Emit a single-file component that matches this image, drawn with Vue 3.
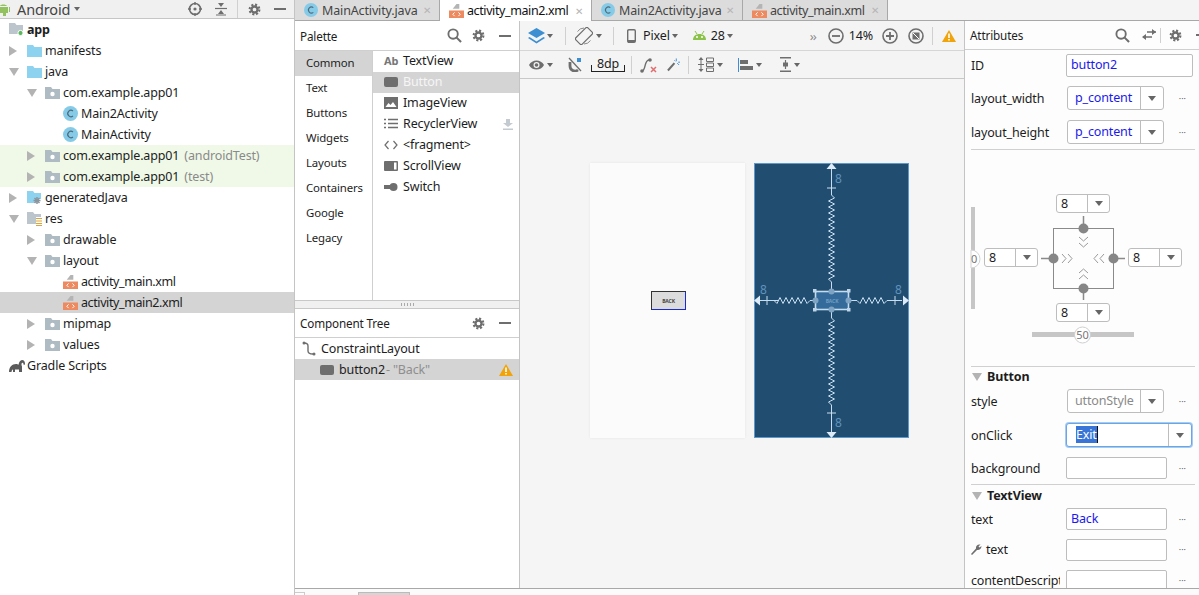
<template>
  <div class="ide">
    <!-- hidden icon sprite -->
    <svg class="sprite" width="0" height="0">
      <defs>
        <symbol id="gear" viewBox="0 0 16 16">
          <circle cx="8" cy="8" r="3.7" fill="none" stroke="currentColor" stroke-width="2.8" />
          <circle cx="8" cy="8" r="6" fill="none" stroke="currentColor" stroke-width="2.6" stroke-dasharray="2.5 2.21" />
        </symbol>
        <symbol id="search" viewBox="0 0 16 16">
          <circle cx="6.5" cy="6.5" r="5" fill="none" stroke="currentColor" stroke-width="2" />
          <path d="M10 10l5 5" stroke="currentColor" stroke-width="2.2" />
        </symbol>
        <symbol id="folder" viewBox="0 0 15 12">
          <path d="M0 0h6l1.5 2H15v10H0z" fill="currentColor" />
        </symbol>
        <symbol id="pkg" viewBox="0 0 15 12">
          <path d="M0 0h6l1.5 2H15v10H0z" fill="#afbbc3" />
          <circle cx="7.5" cy="7" r="2.2" fill="#fff" />
        </symbol>
        <symbol id="xml" viewBox="0 0 16 16">
          <path d="M4 6l4-5h3v5z" fill="#b4b4b4" />
          <rect y="8" width="16" height="8" fill="#ee8a5f" />
          <path d="M6 10l-2 2 2 2M10 10l2 2-2 2" fill="none" stroke="#fff" stroke-width="1" />
        </symbol>
        <symbol id="warn" viewBox="0 0 14 12">
          <path d="M7 0l7 12H0z" fill="#f0a30a" />
          <path d="M6.2 3.5h1.6v4.6H6.2zM6.2 9h1.6v1.6H6.2z" fill="#fff" />
        </symbol>
        <symbol id="clazz" viewBox="0 0 15 15">
          <circle cx="7.5" cy="7.5" r="7.5" fill="#85cbe8" />
          <path d="M10 5a3.2 3.2 0 1 0 0 5" fill="none" stroke="#4e6b7c" stroke-width="1.2" />
        </symbol>
      </defs>
    </svg>

    <aside class="project">
      <div class="project-head">
        <svg class="droid" width="10" height="13" viewBox="0 0 10 13"><path d="M-2 4h10v6H6v3H3v-3H-2zM9 4h1v5H9zM0 3c.5-2 6-2 7 0z" fill="#93c15f" /></svg>
        <span class="project-title">Android</span>
        <span class="caret big"></span>
        <svg class="ph-target" width="14" height="14" viewBox="0 0 14 14"><circle cx="7" cy="7" r="5.5" fill="none" stroke="#6e6e6e" stroke-width="1.6" /><circle cx="7" cy="7" r="1.6" fill="#6e6e6e" /><path d="M7 0v3M7 11v3M0 7h3M11 7h3" stroke="#6e6e6e" stroke-width="1.4" /></svg>
        <svg class="ph-collapse" width="12" height="14" viewBox="0 0 12 14"><path d="M0 6.5h12" stroke="#6e6e6e" stroke-width="1.2" /><path d="M6 5L3 1h6zM6 8l3 4H3z" fill="#6e6e6e" /><path d="M1 13h10" stroke="#6e6e6e" /></svg>
        <i class="vsep ph-sep"></i>
        <svg class="ph-gear" width="13" height="13"><use href="#gear" /></svg>
        <i class="dash ph-dash"></i>
      </div>
      <div class="tree">
        <div
          v-for="row in tree"
          :key="row.name + row.extra"
          class="tree-row"
          :class="[row.tint]"
          :style="{ paddingLeft: row.indent + 'px' }"
        >
          <span v-if="row.arrow" class="arrow" :class="row.arrow"></span>
          <svg v-if="row.icon === 'blue'" class="ti" width="15" height="12"><use href="#folder" /></svg>
          <svg v-else-if="row.icon === 'pkg'" class="ti" width="15" height="12"><use href="#pkg" /></svg>
          <svg v-else-if="row.icon === 'class'" class="ti cls" width="15" height="15"><use href="#clazz" /></svg>
          <svg v-else-if="row.icon === 'xml'" class="ti cls" width="15" height="15"><use href="#xml" /></svg>
          <svg v-else-if="row.icon === 'module'" class="ti" width="15" height="13" viewBox="0 0 15 13"><path d="M0 0h6l1.5 2H14v9H0z" fill="#bcc5cb" /><circle cx="11.5" cy="10" r="2.6" fill="#5cb85c" stroke="#fff" /></svg>
          <svg v-else-if="row.icon === 'gen'" class="ti" width="15" height="14" viewBox="0 0 15 14"><path d="M0 0h6l1.5 2H14v6H8v4H0z" fill="#8dd3ef" /><path d="M10 6v7M6.5 9.5h7M7.5 7l5 5M12.5 7l-5 5" stroke="#8a969e" stroke-width="1.5" /></svg>
          <svg v-else-if="row.icon === 'res'" class="ti" width="15" height="14" viewBox="0 0 15 14"><path d="M0 0h6l1.5 2H14v3H9v7H0z" fill="#bcc5cb" /><path d="M9 6.5h6M9 9h6M9 11.500h6M9 13.500h6" stroke="#e0a33a" /></svg>
          <svg v-else-if="row.icon === 'gradle'" class="ti elephant" width="16" height="14" viewBox="0 0 16 14"><path d="M0 13C0 8 3 5 7 5c1 0 2 .4 2.500.8C10 3 11.500 1 13.500 1 15.500 1 16 3.500 16 5c0 1-1 1-1.500.5 0-1-.5-2-1.500-1.500-.8.500-.5 2 0 3.500V13h-3v-2.500H6V13H4v-2.500C3 10.500 2.500 12 2.500 13z" fill="#5b5b5b" /></svg>
          <span class="tree-name" :class="{ strong: row.strong, tight: row.icon === 'xml' }">{{ row.name }}</span>
          <span v-if="row.extra" class="tree-extra">{{ row.extra }}</span>
        </div>
      </div>
    </aside>

    <div class="main">
      <div class="tabs">
        <div v-for="tab in tabs" :key="tab.name" class="tab" :class="{ active: tab.active }" :style="{ width: tab.width + 'px' }">
          <svg v-if="tab.icon === 'class'" class="tab-icon" width="14" height="14"><use href="#clazz" /></svg>
          <svg v-else class="tab-icon xml" width="15" height="15"><use href="#xml" /></svg>
          <span class="tab-name" :class="{ tight: tab.icon === 'xml' }">{{ tab.name }}</span>
          <span class="tab-x">✕</span>
        </div>
      </div>

      <div class="panes">
        <section class="palette">
          <div class="ph">
            <span class="ph-title">Palette</span>
            <svg class="i-search" width="15" height="15"><use href="#search" /></svg>
            <svg class="i-gear" width="13" height="13"><use href="#gear" /></svg>
            <i class="dash i-dash"></i>
          </div>
          <div class="palette-body">
            <ul class="cats">
              <li v-for="(c, i) in categories" :key="c" :class="{ sel: i === 0 }">{{ c }}</li>
            </ul>
            <ul class="widgets">
              <li v-for="w in widgets" :key="w.name" :class="{ sel: w.name === 'Button' }">
                <span class="wi">
                  <b v-if="w.icon === 'ab'" class="ab">Ab</b>
                  <svg v-else-if="w.icon === 'button'" width="14" height="10"><rect width="14" height="10" rx="2" fill="#6e6e6e" /></svg>
                  <svg v-else-if="w.icon === 'image'" width="14" height="12" viewBox="0 0 14 12"><path d="M0 0h14v12H0z" fill="#6e6e6e" /><path d="M1.500 10l3-4 2 2 2.500-3 3.500 5z" fill="#fff" /></svg>
                  <svg v-else-if="w.icon === 'list'" width="14" height="11" viewBox="0 0 14 11"><path d="M0 1.500h2M4 1.500h10M0 5.500h2M4 5.500h10M0 9.500h2M4 9.500h10" stroke="#6e6e6e" stroke-width="1.600" /></svg>
                  <svg v-else-if="w.icon === 'code'" width="14" height="10" viewBox="0 0 14 10"><path d="M4.500 1L1 5l3.500 4M9.500 1L13 5l-3.500 4" fill="none" stroke="#6e6e6e" stroke-width="1.200" /></svg>
                  <svg v-else-if="w.icon === 'scroll'" width="14" height="10" viewBox="0 0 14 10"><rect width="14" height="10" rx="1" fill="#6e6e6e" /><rect x="10" y="1.500" width="2.500" height="7" fill="#fff" /></svg>
                  <svg v-else width="14" height="10" viewBox="0 0 14 10"><rect y="3" width="7" height="4" fill="#6e6e6e" /><circle cx="9.500" cy="5" r="4" fill="#6e6e6e" /></svg>
                </span>
                <span>{{ w.name }}</span>
                <svg v-if="w.download" class="dl" width="10" height="12" viewBox="0 0 10 12"><path d="M3 0h4v4h3L5 8 0 4h3zM0 9.500h10V11H0z" fill="#c3cbd1" /></svg>
              </li>
            </ul>
          </div>
          <div class="splitter"><span class="grip"></span></div>
          <div class="ph ct-head">
            <span class="ph-title">Component Tree</span>
            <svg class="i-gear solo" width="13" height="13"><use href="#gear" /></svg>
            <i class="dash i-dash"></i>
          </div>
          <div class="ct-row">
            <svg class="ct-ic" width="14" height="15" viewBox="0 0 14 15"><path d="M2 2c3 0 4 1 4 3v5c0 2 2 3 5 3" fill="none" stroke="#6e6e6e" stroke-width="1.400" /><circle cx="2" cy="2" r="1.500" fill="#6e6e6e" /><circle cx="12" cy="13" r="1.500" fill="#6e6e6e" /></svg>
            <span>ConstraintLayout</span>
          </div>
          <div class="ct-row sel">
            <svg class="ct-btn" width="14" height="10"><rect width="14" height="10" rx="2" fill="#6e6e6e" /></svg>
            <span>button2</span><span class="muted">- "Back"</span>
            <svg class="ct-warn" width="14" height="12"><use href="#warn" /></svg>
          </div>
        </section>

        <section class="design">
          <div class="toolbar">
            <svg class="t-layers" width="17" height="16" viewBox="0 0 17 16"><path d="M8.500 0L17 5l-8.500 5L0 5z" fill="#3d8fd1" /><path d="M1.500 9l7 4.500 7-4.500 1.500 1-8.500 5.500L0 10z" fill="#3d8fd1" /></svg>
            <span class="caret c2"></span>
            <i class="vsep s12"></i>
            <svg class="m9" width="18" height="18" viewBox="0 0 18 18"><g transform="rotate(45 9 9)" fill="none" stroke="#6e6e6e" stroke-width="1.200"><rect x="4.500" y="0.500" width="9" height="17" rx="1.500" /></g><path d="M2.500 4.500A8 8 0 0 1 9 1M15.500 13.500A8 8 0 0 1 9 17" fill="none" stroke="#6e6e6e" stroke-width=".8" /></svg>
            <span class="caret c3"></span>
            <i class="vsep s11"></i>
            <svg class="m13" width="9" height="14" viewBox="0 0 9 14"><rect x=".7" y=".7" width="7.600" height="12.600" rx="1.200" fill="none" stroke="#6e6e6e" stroke-width="1.400" /><path d="M1 11h7v2H1z" fill="#6e6e6e" /></svg>
            <span class="t-label m7">Pixel</span>
            <span class="caret c2"></span>
            <svg class="m15" width="13" height="9" viewBox="0 0 13 9"><path d="M0 9c0-4 3-6 6.500-6S13 5 13 9z" fill="#8bc34a" /><path d="M2 0l2 3M11 0L9 3" stroke="#8bc34a" /><circle cx="4" cy="6" r="1" fill="#fff" /><circle cx="9" cy="6" r="1" fill="#fff" /></svg>
            <span class="t-label m5">28</span>
            <span class="caret c2"></span>
            <span class="chev">››</span>
            <svg class="m12" width="16" height="16" viewBox="0 0 16 16"><circle cx="8" cy="8" r="7" fill="none" stroke="#6e6e6e" stroke-width="1.600" /><path d="M4 8h8" stroke="#6e6e6e" stroke-width="1.800" /></svg>
            <span class="t-label m5">14%</span>
            <svg class="m9" width="16" height="16" viewBox="0 0 16 16"><circle cx="8" cy="8" r="7" fill="none" stroke="#6e6e6e" stroke-width="1.600" /><path d="M4 8h8M8 4v8" stroke="#6e6e6e" stroke-width="1.800" /></svg>
            <svg class="m10" width="16" height="16" viewBox="0 0 16 16"><circle cx="8" cy="8" r="7" fill="none" stroke="#6e6e6e" stroke-width="1.600" /><rect x="4.500" y="4.500" width="7" height="7" fill="#6e6e6e" /><path d="M5 5l6 6" stroke="#fff" /></svg>
            <i class="vsep s8"></i>
            <svg class="m9" width="14" height="12"><use href="#warn" /></svg>
          </div>
          <div class="toolbar second">
            <svg class="t-eye" width="15" height="10" viewBox="0 0 15 10"><path d="M0 5c3-6 12-6 15 0-3 6-12 6-15 0z" fill="#6e6e6e" /><circle cx="7.500" cy="5" r="3" fill="#f4f4f4" /><circle cx="7.500" cy="5" r="1.800" fill="#6e6e6e" /></svg>
            <span class="caret c3"></span>
            <svg class="m15" width="14" height="15" viewBox="0 0 14 15"><path d="M2 5v4a5 5 0 0 0 8 4" fill="none" stroke="#6e6e6e" stroke-width="2.800" /><path d="M1 1l12 13" stroke="#6e6e6e" stroke-width="1.300" /><rect x="9" y="1" width="4" height="4" fill="#3d8fd1" /></svg>
            <span class="ruler">8dp</span>
            <i class="vsep s6"></i>
            <svg class="m8" width="17" height="16" viewBox="0 0 17 16"><path d="M2 14c4 0 2-11 7-11" fill="none" stroke="#6e6e6e" stroke-width="1.400" /><circle cx="2" cy="14" r="1.800" fill="#6e6e6e" /><circle cx="10" cy="3" r="1.800" fill="#6e6e6e" /><path d="M11 10l5 5M16 10l-5 5" stroke="#e26d6d" stroke-width="1.500" /></svg>
            <svg class="m10" width="13" height="15" viewBox="0 0 14 15"><path d="M1 14l7-8" stroke="#6e6e6e" stroke-width="2.200" /><path d="M10 1v3M12 5h2M8 3l1 1M11 6l2 2" stroke="#3d8fd1" /></svg>
            <i class="vsep s8"></i>
            <svg class="m9" width="16" height="15" viewBox="0 0 16 15"><path d="M3 0l2.500 3h-5zM3 15L.5 12h5zM2.500 3h1v9h-1zM0 7.500h6" fill="#6e6e6e" stroke="none" /><path d="M8.500 1h7v3.500h-7zM8.500 6h7v3.500h-7zM8.500 11h7v3.500h-7z" fill="none" stroke="#6e6e6e" /><path d="M0 7.500h6" stroke="#6e6e6e" /></svg>
            <span class="caret c3"></span>
            <svg class="m15" width="15" height="14" viewBox="0 0 15 14"><path d="M.5 0v14" stroke="#3d8fd1" /><path d="M2 2h8v4H2zM2 8h13v4H2z" fill="#6e6e6e" /></svg>
            <span class="caret c3"></span>
            <svg class="m18" width="11" height="15" viewBox="0 0 11 15"><path d="M0 .8h11M0 14.200h11" stroke="#6e6e6e" stroke-width="1.600" /><path d="M5.500 3v9" stroke="#6e6e6e" stroke-width="1.200" /><rect x="3" y="5.500" width="5" height="4" fill="#6e6e6e" /></svg>
            <span class="caret c3"></span>
          </div>
          <div class="canvas">
            <div class="page light">
              <svg width="155" height="275" viewBox="0 0 155 275">
                <rect x="61.500" y="128.500" width="34" height="18" fill="#dcdcdc" stroke="#333" />
                <path d="M62 146.500h33.500V129" fill="none" stroke="#1a2bd6" />
                <text x="78.500" y="139.500" class="tiny dark">BACK</text>
              </svg>
            </div>
            <div class="page blue">
              <svg width="155" height="275" viewBox="0 0 155 275">
                <g stroke="#c9dff0" fill="none">
                  <polyline :points="zigTop" />
                  <polyline :points="zigBottom" />
                  <polyline :points="zigLeft" />
                  <polyline :points="zigRight" />
                  <path d="M77.500 6v19M73 25h9M77.500 250v19M73 250h9M6 137.500h19M13 133v9M148 137.500h-7M141 133v9M134 137.500h7" />
                </g>
                <path d="M77.500 0l5 6h-10zM77.500 275l-5-6h10zM0 137.500l6-5v10zM155 137.500l-6-5v10z" fill="#dcebf7" />
                <rect x="61.500" y="128.500" width="33" height="18" fill="#356b9a" stroke="#c5dcef" stroke-width="1.600" />
                <g fill="#bfd6ea">
                  <rect x="59" y="126" width="3.500" height="3.500" /><rect x="93" y="126" width="3.500" height="3.500" />
                  <rect x="59" y="145" width="3.500" height="3.500" /><rect x="93" y="145" width="3.500" height="3.500" />
                </g>
                <g fill="#7fa3c3">
                  <circle cx="77.500" cy="128.500" r="3" /><circle cx="77.500" cy="146.500" r="3" />
                  <circle cx="61.500" cy="137.500" r="3" /><circle cx="94.500" cy="137.500" r="3" />
                </g>
                <text x="78" y="139.500" class="tiny pale">BACK</text>
                <text x="81" y="20" class="eight">8</text>
                <text x="81" y="264" class="eight">8</text>
                <text x="6" y="131" class="eight">8</text>
                <text x="141" y="131" class="eight">8</text>
              </svg>
            </div>
          </div>
        </section>

        <section class="attrs">
          <div class="ph attr-head">
            <span class="ph-title">Attributes</span>
            <svg class="a-search" width="15" height="15"><use href="#search" /></svg>
            <svg class="a-swap" width="14" height="12" viewBox="0 0 14 12"><path d="M1 8h9M14 3H5" stroke="#6e6e6e" stroke-width="1.500" /><path d="M0 8l4-3v6zM14 3L10 0v6z" fill="#6e6e6e" /></svg>
            <i class="vsep a-sep"></i>
            <svg class="a-gear" width="13" height="13"><use href="#gear" /></svg>
            <i class="dash a-dash"></i>
          </div>

          <div class="attr h31">
            <label>ID</label>
            <div class="field wide blue-text">button2</div>
          </div>
          <div class="attr h34">
            <label>layout_width</label>
            <div class="combo blue-text"><span class="combo-text">p_content</span><span class="combo-btn"><span class="caret"></span></span></div>
            <span class="dots">···</span>
          </div>
          <div class="attr h34">
            <label>layout_height</label>
            <div class="combo blue-text"><span class="combo-text">p_content</span><span class="combo-btn"><span class="caret"></span></span></div>
            <span class="dots">···</span>
          </div>
          <hr />

          <!-- constraint widget, drawn as a small diagram -->
          <div class="constraint">
            <svg width="234" height="216" viewBox="0 0 234 216">
              <rect x="6" y="57" width="4" height="102" fill="#c6c6c6" />
              <rect x="67" y="182" width="102" height="5" fill="#c6c6c6" />
              <path d="M6 100a9 9 0 0 1 0 18z" fill="#fff" stroke="#d4d4d4" />
              <text x="9" y="113" class="knob">0</text>
              <circle cx="117.500" cy="185" r="8" fill="#fff" stroke="#cfcfcf" />
              <text x="117.500" y="189" class="knob">50</text>
              <rect x="88.500" y="78.500" width="60" height="60" fill="none" stroke="#8a8a8a" />
              <path d="M118.500 66v12M118.500 138v12M76 108.500h12M148 108.500h12" stroke="#8a8a8a" stroke-width="1.500" />
              <g fill="#868686">
                <circle cx="118.500" cy="78.500" r="5" /><circle cx="118.500" cy="138.500" r="5" />
                <circle cx="88.500" cy="108.500" r="5" /><circle cx="148.500" cy="108.500" r="5" />
              </g>
              <path d="M114 87l4.500 4 4.500-4M114 93l4.500 4 4.500-4M114 129l4.500-4 4.500 4M114 123l4.500-4 4.500 4M97 104l4 4.500-4 4.500M103 104l4 4.500-4 4.500M139 104l-4 4.500 4 4.500M133 104l-4 4.500 4 4.500" fill="none" stroke="#9a9a9a" />
            </svg>
            <div v-for="m in margins" :key="m" class="mini" :class="m"><span class="combo-text">8</span><span class="combo-btn"><span class="caret"></span></span></div>
          </div>
          <hr />

          <div class="section h17"><span class="arrow down"></span><b>Button</b></div>
          <div class="attr h34">
            <label>style</label>
            <div class="combo gray-text"><span class="combo-text clipped"><span>uttonStyle</span></span><span class="combo-btn"><span class="caret"></span></span></div>
            <span class="dots">···</span>
          </div>
          <div class="attr h34">
            <label>onClick</label>
            <div class="combo focus"><span class="combo-text"><span class="selected">Exit</span></span><span class="combo-btn"><span class="caret"></span></span></div>
          </div>
          <div class="attr h32">
            <label>background</label>
            <div class="field"></div>
            <span class="dots">···</span>
          </div>
          <hr />
          <div class="section h19"><span class="arrow down"></span><b>TextView</b></div>
          <div class="attr h30">
            <label>text</label>
            <div class="field blue-text">Back</div>
            <span class="dots">···</span>
          </div>
          <div class="attr h31">
            <label class="tool">
              <svg width="11" height="11" viewBox="0 0 11 11"><path d="M0 10l5-5.500C4.500 2 6.500 0 9.500.500L7.500 2.500 8.500 3.500l2-1.500C10.500 5 8 6.500 6 6l-5 5z" fill="#6e6e6e" /></svg>
              text
            </label>
            <div class="field"></div>
            <span class="dots">···</span>
          </div>
          <div class="attr h31">
            <label>contentDescription</label>
            <div class="field"></div>
            <span class="dots">···</span>
          </div>
        </section>
      </div>

      <div class="bottom"><span class="bt one"></span><span class="bt two"></span></div>
    </div>
  </div>
</template>

<script setup>
const tree = [
  { name: 'app', indent: 9, icon: 'module', strong: true },
  { name: 'manifests', indent: 9, arrow: 'right', icon: 'blue' },
  { name: 'java', indent: 9, arrow: 'down', icon: 'blue' },
  { name: 'com.example.app01', indent: 27, arrow: 'down', icon: 'pkg' },
  { name: 'Main2Activity', indent: 63, icon: 'class' },
  { name: 'MainActivity', indent: 63, icon: 'class' },
  { name: 'com.example.app01', extra: '(androidTest)', indent: 27, arrow: 'right', icon: 'pkg', tint: 'green' },
  { name: 'com.example.app01', extra: '(test)', indent: 27, arrow: 'right', icon: 'pkg', tint: 'green' },
  { name: 'generatedJava', indent: 9, arrow: 'right', icon: 'gen' },
  { name: 'res', indent: 9, arrow: 'down', icon: 'res' },
  { name: 'drawable', indent: 27, arrow: 'right', icon: 'pkg' },
  { name: 'layout', indent: 27, arrow: 'down', icon: 'pkg' },
  { name: 'activity_main.xml', indent: 63, icon: 'xml' },
  { name: 'activity_main2.xml', indent: 63, icon: 'xml', tint: 'picked' },
  { name: 'mipmap', indent: 27, arrow: 'right', icon: 'pkg' },
  { name: 'values', indent: 27, arrow: 'right', icon: 'pkg' },
  { name: 'Gradle Scripts', indent: 9, icon: 'gradle' }
]

const tabs = [
  { name: 'MainActivity.java', icon: 'class', width: 145 },
  { name: 'activity_main2.xml', icon: 'xml', width: 152, active: true },
  { name: 'Main2Activity.java', icon: 'class', width: 151 },
  { name: 'activity_main.xml', icon: 'xml', width: 145 }
]

const categories = ['Common', 'Text', 'Buttons', 'Widgets', 'Layouts', 'Containers', 'Google', 'Legacy']

const widgets = [
  { name: 'TextView', icon: 'ab' },
  { name: 'Button', icon: 'button' },
  { name: 'ImageView', icon: 'image' },
  { name: 'RecyclerView', icon: 'list', download: true },
  { name: '<fragment>', icon: 'code' },
  { name: 'ScrollView', icon: 'scroll' },
  { name: 'Switch', icon: 'switch' }
]

const margins = ['top', 'left', 'right', 'under']

// spring lines of the blueprint
const zig = (from, to, fixed, vertical) => {
  const pts = []
  const dir = to > from ? 1 : -1
  const count = Math.round(Math.abs(to - from) / 3)
  for (let i = 0; i <= count; i++) {
    const along = from + dir * i * 3
    const off = i === 0 || i === count ? 0 : i % 2 ? 3 : -3
    pts.push(vertical ? `${fixed + off},${along}` : `${along},${fixed + off}`)
  }
  return pts.join(' ')
}

const zigTop = `77.5,25 77.5,31 ${zig(32, 120, 77.5, true)} 77.5,128`
const zigBottom = `77.5,147 ${zig(155, 242, 77.5, true)} 77.5,250`
const zigLeft = `25,137.5 ${zig(20, 56, 137.5, false)} 61,137.5`
const zigRight = `95,137.5 ${zig(103, 132, 137.5, false)} 141,137.5`
</script>

<style>
html, body { margin: 0; background: #fff; overflow: hidden; }
</style>

<style scoped>
.ide {
  width: 1199px;
  height: 595px;
  display: flex;
  overflow: hidden;
  font-family: "Noto Sans", "Liberation Sans", sans-serif;
  font-size: 12.5px;
  letter-spacing: -0.14px;
  color: #1d1d1d;
  background: #fff;
}
.sprite { position: absolute; }
ul { list-style: none; margin: 0; padding: 0; }
svg { flex: none; display: block; }
i { display: block; flex: none; }
.tight { letter-spacing: -0.4px; }

.caret {
  display: inline-block;
  flex: none;
  width: 0;
  height: 0;
  border-left: 3.5px solid transparent;
  border-right: 3.5px solid transparent;
  border-top: 4px solid #666;
}
.caret.big { margin-left: 11px; }
.vsep { width: 1px; height: 18px; background: #d0d0d0; }
.dash { width: 12px; height: 2px; background: #6e6e6e; }

/* project panel */
.project { width: 295px; flex: none; box-sizing: border-box; border-right: 1px solid #c4c4c4; }
.project-head {
  height: 18px;
  display: flex;
  align-items: center;
  background: #f0f0f0;
  border-bottom: 1px solid #c6c6c6;
  color: #6e6e6e;
}
.droid { margin-right: 7px; }
.project-title { font-size: 14.5px; color: #444; width: 46px; }
.ph-target { margin-left: 108px; }
.ph-collapse { margin-left: 13px; }
.ph-sep { margin-left: 10px; }
.ph-gear { margin-left: 10px; }
.ph-dash { margin-left: 13px; }
.tree-row { height: 21px; display: flex; align-items: center; box-sizing: border-box; }
.tree-row.green { background: #f0f9e8; }
.tree-row.picked { background: #d4d4d4; }
.arrow { width: 18px; flex: none; position: relative; height: 10px; }
.arrow::before { content: ""; position: absolute; left: 0; top: 0; border-style: solid; border-color: transparent; }
.arrow.right::before { border-width: 5px 0 5px 8px; border-left-color: #b3b3b3; }
.arrow.down::before { border-width: 8px 5px 0 5px; border-top-color: #b3b3b3; top: 1px; }
.ti { margin-right: 3px; color: #8dd3ef; }
.ti.elephant { margin-right: 2px; }
.tree-name.strong { font-weight: 700; }
.tree-extra { color: #8a8a8a; margin-left: 5px; }

/* tabs */
.main { flex: 1; min-width: 0; display: flex; flex-direction: column; }
.tabs { height: 20px; flex: none; display: flex; background: #f4f4f4; border-bottom: 1px solid #a8a8a8; }
.tab {
  display: flex;
  align-items: center;
  box-sizing: border-box;
  height: 20px;
  padding-left: 9px;
  background: #dcdcdc;
  border-right: 1px solid #a8a8a8;
  color: #444;
  overflow: hidden;
}
.tab.active { background: #fff; height: 21px; color: #111; }
.tab-icon { margin-right: 4px; }
.tab-icon.xml { margin-right: 3px; }
.tab-x { margin-left: auto; margin-right: 8px; color: #b5b5b5; font-size: 10px; }

.panes { flex: 1; min-height: 0; display: flex; }
.bottom { height: 6px; flex: none; border-top: 1px solid #a8a8a8; background: #fbfbfb; display: flex; align-items: flex-end; }
.bt { display: block; height: 2px; box-sizing: content-box; }
.bt.one { width: 9px; background: #fff; border: 1px solid #ccc; border-bottom: 0; border-left: 0; }
.bt.two { width: 50px; margin-left: 53px; background: #d6d6d6; border: 1px solid #bbb; border-bottom: 0; }

/* palette */
.palette { width: 225px; flex: none; box-sizing: border-box; border-right: 1px solid #c4c4c4; display: flex; flex-direction: column; }
.ph {
  height: 29px;
  flex: none;
  display: flex;
  align-items: center;
  padding-left: 5px;
  border-bottom: 1px solid #cfcfcf;
  color: #6e6e6e;
}
.ph-title { color: #1d1d1d; font-size: 11.7px; }
.i-search { margin-left: auto; }
.i-gear { margin-left: 10px; }
.i-gear.solo { margin-left: auto; }
.i-dash { margin-left: 14px; margin-right: 8px; }
.palette-body { height: 249px; flex: none; display: flex; }
.cats { width: 78px; flex: none; box-sizing: border-box; border-right: 1px solid #cfcfcf; font-size: 11.4px; }
.cats li { height: 25px; line-height: 24px; padding-left: 11px; }
.cats li.sel { background: #d4d4d4; }
.widgets { flex: 1; min-width: 0; }
.widgets li { height: 21px; box-sizing: border-box; padding-bottom: 2px; display: flex; align-items: center; padding-left: 11px; position: relative; }
.widgets li.sel { background: #d4d4d4; color: #f6f6f6; }
.wi { width: 19px; flex: none; display: flex; color: #6e6e6e; }
.ab { font-size: 11px; font-weight: 700; line-height: 1; color: #777; }
.dl { position: absolute; right: 6px; top: 5px; }
.splitter {
  height: 7px;
  flex: none;
  background: #f0f0f0;
  border-top: 1px solid #c8c8c8;
  border-bottom: 1px solid #c8c8c8;
  display: flex;
  justify-content: center;
  align-items: center;
}
.grip { width: 13px; height: 3px; background: repeating-linear-gradient(90deg, #aaa 0 1px, transparent 1px 3px); }
.ct-head { height: 28px; }
.ct-row { height: 21px; display: flex; align-items: center; padding-left: 7px; }
.ct-row.sel { background: #d4d4d4; }
.ct-ic { margin-right: 5px; }
.ct-btn { margin-left: 18px; margin-right: 5px; }
.muted { color: #8e8e8e; margin-left: 1px; }
.ct-warn { margin-left: auto; margin-right: 6px; }

/* design surface */
.design { flex: 1; min-width: 0; display: flex; flex-direction: column; background: #f5f5f5; border-right: 1px solid #c4c4c4; }
.toolbar { height: 29px; flex: none; display: flex; align-items: center; background: #f4f4f4; padding: 0 8px; border-bottom: 1px solid #d6d6d6; }
.toolbar.second { height: 27px; padding-left: 9px; border-bottom-color: #c8c8c8; }
.t-label { font-size: 12.5px; }
.c2 { margin-left: 2px; }
.c3 { margin-left: 3px; }
.s12 { margin-left: 12px; }
.s11 { margin-left: 11px; }
.s8 { margin-left: 8px; }
.s6 { margin-left: 6px; }
.m5 { margin-left: 5px; }
.m7 { margin-left: 7px; }
.m8 { margin-left: 8px; }
.m9 { margin-left: 9px; }
.m10 { margin-left: 10px; }
.m12 { margin-left: 12px; }
.m13 { margin-left: 13px; }
.m15 { margin-left: 15px; }
.m18 { margin-left: 18px; }
.chev { margin-left: auto; color: #8a8a8a; font-size: 13px; letter-spacing: -1px; }
.ruler {
  margin-left: 9px;
  width: 34px;
  height: 14px;
  line-height: 12px;
  text-align: center;
  box-sizing: border-box;
  border-bottom: 1px solid #222;
  border-left: 1px solid #222;
  border-right: 1px solid #222;
  border-image: linear-gradient(to bottom, transparent 55%, #222 55%) 1;
}
.canvas { flex: 1; min-height: 0; display: flex; gap: 9px; padding: 84px 0 0 70px; }
.page { width: 155px; height: 275px; }
.page.light { background: #fbfbfb; box-shadow: 0 0 2px #e4e4e4; }
.page.blue { background: #214d70; box-shadow: 0 0 0 1px #5d98cc inset; }
.tiny { font-size: 5px; text-anchor: middle; font-weight: 700; }
.dark { fill: #444; }
.pale { fill: #6f9cc2; }
.eight { font-size: 12px; fill: #5f92bd; }

/* attributes */
.attrs { width: 234px; flex: none; overflow: hidden; background: #fdfdfd; }
.attr-head { height: 28px; }
.a-search { margin-left: auto; }
.a-swap { margin-left: 12px; }
.a-sep { margin-left: 4px; height: 15px; }
.a-gear { margin-left: 8px; }
.a-dash { margin-left: 14px; margin-right: -9px; }
.attr { display: flex; align-items: center; padding-left: 6px; padding-right: 13px; }
.attr label { width: 89px; margin-right: 6px; flex: none; overflow: hidden; white-space: nowrap; display: flex; align-items: center; gap: 4px; }
.h17 { height: 17px; }
.h19 { height: 19px; }
.h30 { height: 30px; }
.h31 { height: 31px; }
.h32 { height: 32px; }
.h34 { height: 34px; }
.field {
  width: 101px;
  height: 22px;
  line-height: 20px;
  flex: none;
  box-sizing: border-box;
  border: 1px solid #bdbdbd;
  border-radius: 2px;
  padding-left: 4px;
  background: #fff;
}
.field.wide { width: 127px; height: 23px; }
.blue-text { color: #1a1aee; }
.gray-text { color: #8a8a8a; }
.combo {
  width: 97px;
  height: 24px;
  margin-left: 1px;
  flex: none;
  box-sizing: border-box;
  display: flex;
  border: 1px solid #bdbdbd;
  border-radius: 3px;
  background: #fff;
}
.combo-text { flex: 1; min-width: 0; line-height: 22px; padding-left: 7px; overflow: hidden; white-space: nowrap; }
.combo-btn { width: 22px; flex: none; display: flex; align-items: center; justify-content: center; border-left: 1px solid #bdbdbd; }
.combo-btn .caret { border-left-width: 4px; border-right-width: 4px; border-top-width: 5px; }
.combo.focus { width: 126px; margin-left: 0; border: 1px solid #6aa5e8; box-shadow: 0 0 0 1px #a6cbf3; }
.combo.focus .combo-text { padding-left: 9px; }
.selected { background: #3875d7; color: #fff; border-right: 1px solid #111; }
.dots { margin-left: auto; color: #666; font-size: 9px; letter-spacing: 0; }
hr { margin: 0 4px 0 6px; border: 0; height: 1px; background: #d0d0d0; }
.constraint { height: 216px; position: relative; }
.knob { font-size: 11px; fill: #777; text-anchor: middle; }
.mini {
  position: absolute;
  width: 54px;
  height: 19px;
  display: flex;
  box-sizing: border-box;
  border: 1px solid #bdbdbd;
  border-radius: 3px;
  background: #fff;
}
.mini .combo-text { line-height: 17px; padding-left: 4px; }
.mini .combo-btn { width: 21px; }
.mini.top { left: 91px; top: 44px; }
.mini.left { left: 19px; top: 98px; }
.mini.right { left: 163px; top: 98px; }
.mini.under { left: 91px; top: 153px; }
.section { display: flex; align-items: center; padding-left: 7px; padding-top: 2px; box-sizing: border-box; }
.section .arrow { width: 15px; }
</style>
